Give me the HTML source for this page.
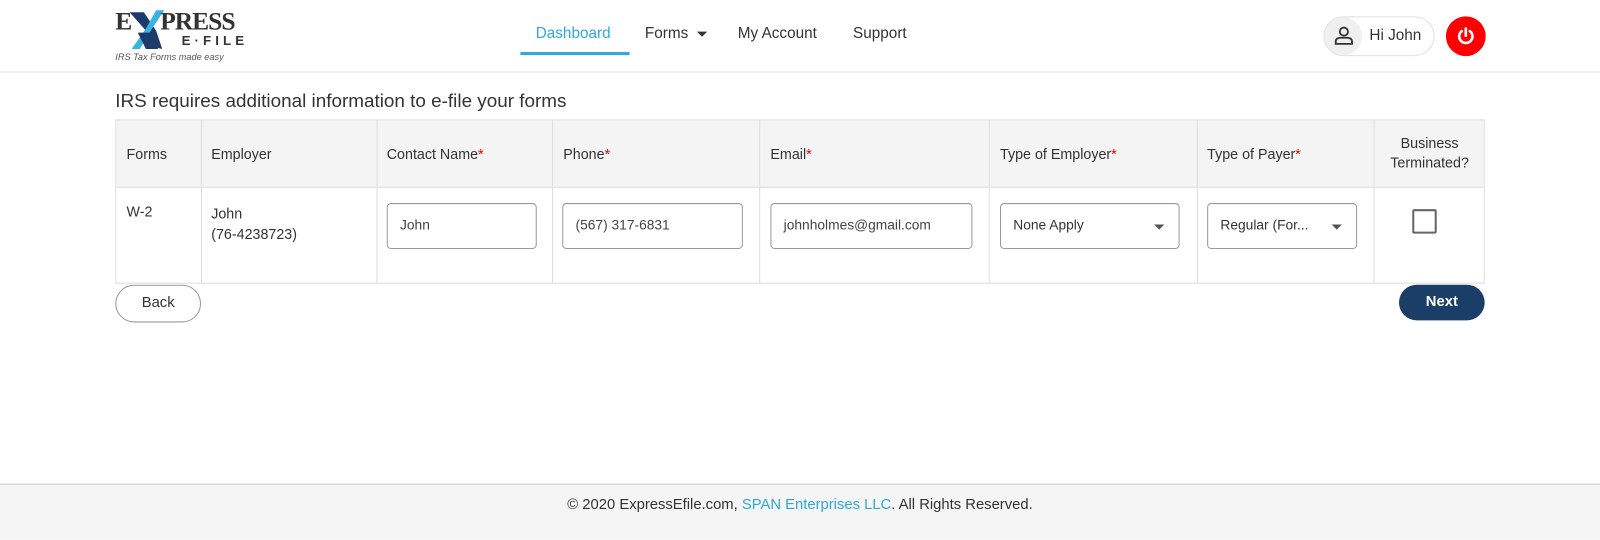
<!DOCTYPE html>
<html><head><style>
*{box-sizing:border-box;margin:0;padding:0}
body{width:1600px;height:529px;background:#fff;font-family:"Liberation Sans",sans-serif;color:#333;position:relative;overflow:hidden}
#w{position:absolute;left:0;top:0;width:1568px;height:519px;transform:scale(1.020408);transform-origin:0 0}
.a{position:absolute}
.hdr{left:0;top:0;width:1568px;height:71px;border-bottom:1px solid #e2e2e2}
.nav{font-size:15px;color:#333;top:24px}
.cell{position:absolute;border-left:1px solid #ddd;top:117px;height:161px}
.th{font-size:14px;color:#333}
.inp{position:absolute;top:199px;height:45px;border:1px solid #999;border-radius:4px;font-size:13.5px;color:#444;padding:13px 12px;white-space:nowrap}
.st{color:#e00}
.car{position:absolute;right:14px;top:20px;border-left:5px solid transparent;border-right:5px solid transparent;border-top:5px solid #555}
</style></head><body><div id="w">
<div class="a hdr"></div>
<div class="a" style="left:113px;top:6px;width:125px;height:58px">
<svg width="125" height="50" viewBox="0 0 125 50" style="position:absolute;left:0;top:0">
<path d="M14 6 L28 6 L40 24 L46 42 L38 40 L30 24 Z" fill="#1e3a6a"/>
<path d="M40 4 L48 4 L36 22 L24 42 L16 42 L30 22 Z" fill="#3ab3e4"/>
<path d="M22 26 L34 26 L42 42 L30 42 Z" fill="#1e3a6a"/>
</svg>
<div class="a" style="left:0;top:2px;font-family:'Liberation Serif',serif;font-size:25px;font-weight:bold;color:#333;letter-spacing:-1px">E</div>
<div class="a" style="left:44px;top:2px;font-family:'Liberation Serif',serif;font-size:25px;font-weight:bold;color:#333;letter-spacing:-1px">PRESS</div>
<div class="a" style="left:65px;top:26px;font-size:13px;color:#333;letter-spacing:4px;font-weight:bold">E·FILE</div>
<div class="a" style="left:0;top:45px;font-size:9px;color:#555;font-style:italic;white-space:nowrap">IRS Tax Forms made easy</div>
</div>
<div class="a nav" style="left:525px;color:#2fa8d8">Dashboard</div>
<div class="a" style="left:510px;top:51px;width:107px;height:3px;background:#2fa8d8"></div>
<div class="a nav" style="left:632px">Forms</div>
<div class="a" style="left:683px;top:31px;border-left:5px solid transparent;border-right:5px solid transparent;border-top:5px solid #333"></div>
<div class="a nav" style="left:723px">My Account</div>
<div class="a nav" style="left:836px">Support</div>
<div class="a" style="left:1297px;top:16px;width:109px;height:39px;border:1px solid #e0e0e0;border-radius:20px"></div>
<div class="a" style="left:1298px;top:17px;width:37px;height:37px;border-radius:50%;background:#f0f0f0"></div>
<svg class="a" style="left:1306px;top:24px" width="22" height="22" viewBox="0 0 22 22" fill="none" stroke="#333" stroke-width="1.8"><circle cx="11" cy="7" r="4"/><path d="M3 19 v-2 q0-4 5-4 h6 q5 0 5 4 v2 z"/></svg>
<div class="a" style="left:1342px;top:26px;font-size:15px;color:#333">Hi John</div>
<div class="a" style="left:1417px;top:16px;width:39px;height:39px;border-radius:50%;background:#f00"></div>
<svg class="a" style="left:1426px;top:25px" width="21" height="21" viewBox="0 0 21 21" fill="none" stroke="#fff" stroke-width="2.6" stroke-linecap="round"><path d="M6.5 5.5 A6.5 6.5 0 1 0 14.5 5.5"/><path d="M10.5 3 V10"/></svg>

<div class="a" style="left:113px;top:88px;font-size:18.5px;color:#333">IRS requires additional information to e-file your forms</div>
<div class="a" style="left:113px;top:117px;width:1342px;height:161px;border:1px solid #ddd"></div>
<div class="a" style="left:114px;top:118px;width:1340px;height:66px;background:#f4f4f4;border-bottom:1px solid #ddd"></div>
<div class="cell" style="left:197px"></div><div class="cell" style="left:369px"></div><div class="cell" style="left:541px"></div><div class="cell" style="left:744px"></div><div class="cell" style="left:969px"></div><div class="cell" style="left:1173px"></div><div class="cell" style="left:1346px"></div>
<div class="a th" style="left:124px;top:143px">Forms</div>
<div class="a th" style="left:207px;top:143px">Employer</div>
<div class="a th" style="left:379px;top:143px">Contact Name<span class="st">*</span></div>
<div class="a th" style="left:552px;top:143px">Phone<span class="st">*</span></div>
<div class="a th" style="left:755px;top:143px">Email<span class="st">*</span></div>
<div class="a th" style="left:980px;top:143px">Type of Employer<span class="st">*</span></div>
<div class="a th" style="left:1183px;top:143px">Type of Payer<span class="st">*</span></div>
<div class="a th" style="left:1347px;top:131px;width:108px;text-align:center;line-height:19px">Business<br>Terminated?</div>
<div class="a th" style="left:124px;top:199px">W-2</div>
<div class="a th" style="left:207px;top:199px;line-height:20px">John<br>(76-4238723)</div>
<div class="inp" style="left:379px;width:147px">John</div>
<div class="inp" style="left:551px;width:177px">(567) 317-6831</div>
<div class="inp" style="left:755px;width:198px">johnholmes@gmail.com</div>
<div class="inp" style="left:980px;width:176px;color:#333">None Apply<span class="car"></span></div>
<div class="inp" style="left:1183px;width:147px;color:#333">Regular (For...<span class="car"></span></div>
<div class="a" style="left:1384px;top:205px;width:24px;height:24px;border:2px solid #666;border-radius:2px"></div>
<div class="a" style="left:113px;top:279px;width:84px;height:37px;border:1px solid #999;border-radius:19px;font-size:14.5px;text-align:center;line-height:35px;color:#333">Back</div>
<div class="a" style="left:1371px;top:279px;width:84px;height:35px;background:#1b3e69;border-radius:18px;font-size:14.5px;font-weight:bold;text-align:center;line-height:35px;color:#fff">Next</div>
<div class="a" style="left:0;top:474px;width:1568px;height:55px;background:#f5f5f5;border-top:1px solid #ccc"></div>
<div class="a" style="left:0;top:487px;width:1568px;text-align:center;font-size:14.5px;color:#333">© 2020 ExpressEfile.com, <span style="color:#2fa8d8">SPAN Enterprises LLC</span>. All Rights Reserved.</div>
</div></body></html>
